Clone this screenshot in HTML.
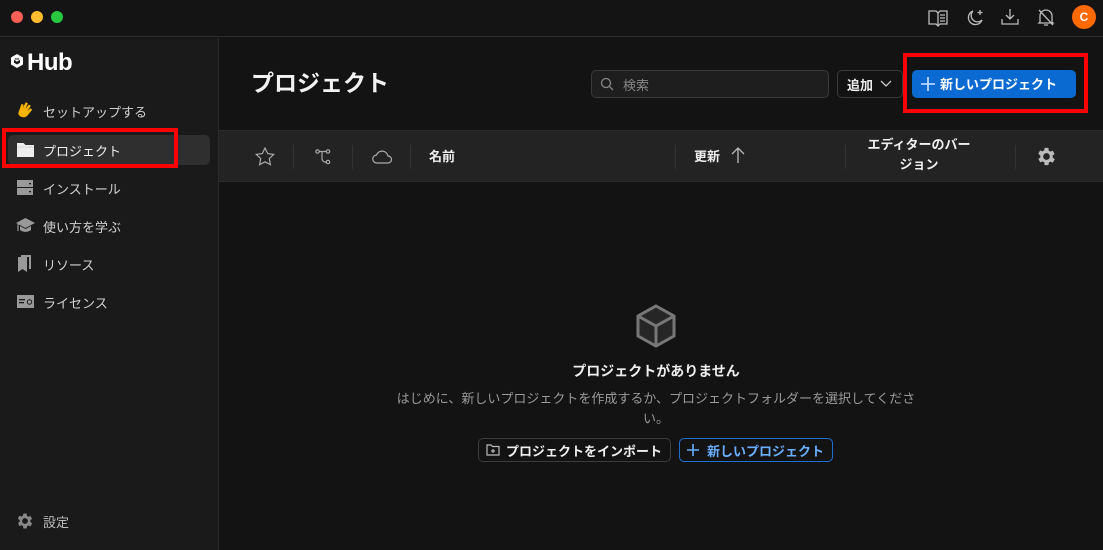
<!DOCTYPE html>
<html><head><meta charset="utf-8"><style>
*{margin:0;padding:0;box-sizing:border-box}
body{width:1103px;height:550px;overflow:hidden;background:#131313;font-family:"Liberation Sans","Noto Sans CJK JP",sans-serif;color:#ddd;position:relative}
.abs{position:absolute}
.title{left:0;top:0;width:1103px;height:37px;background:#141414;border-bottom:1px solid #2e2e2e}
.dot{top:11px;width:12px;height:12px;border-radius:50%}
.side{left:0;top:38px;width:219px;height:512px;background:#1a1a1a;border-right:1px solid #2a2a2a}
.nav{left:0;width:219px;height:30px;font-size:13px;color:#d0d0d0}
.nav svg{position:absolute;left:16px;top:5px}
.nav span{position:absolute;left:43px;top:6px}
.th{left:219px;top:130px;width:884px;height:52px;background:#232323;border-top:1px solid #2c2c2c;border-bottom:1px solid #2c2c2c}
.sep{top:14px;width:1px;height:24px;background:#333}
</style></head><body>
<div class="abs title"></div>
<div class="abs dot" style="left:11px;background:#fe5f57"></div>
<div class="abs dot" style="left:31px;background:#febc2e"></div>
<div class="abs dot" style="left:51px;background:#28c840"></div>
<svg class="abs" style="left:928px;top:9px" width="20" height="18" viewBox="0 0 20 18" fill="none" stroke="#bbb" stroke-width="1.3"><path d="M1 2h7l2 2 2-2h7v13h-7l-2 2-2-2H1z"/><path d="M10 4v13M12 6h5M12 9h5M12 12h5"/></svg>
<svg class="abs" style="left:965px;top:8px" width="20" height="20" viewBox="0 0 20 20" fill="none" stroke="#bbb" stroke-width="1.3"><path d="M8 3a7 7 0 1 0 9 9 6 6 0 0 1-9-9z"/><path d="M15 2v5M12.5 4.5h5"/></svg>
<svg class="abs" style="left:1001px;top:8px" width="18" height="18" viewBox="0 0 18 18" fill="none" stroke="#bbb" stroke-width="1.3"><path d="M9 1v10M5 7l4 4 4-4M1 11v5h16v-5"/></svg>
<svg class="abs" style="left:1037px;top:8px" width="18" height="19" viewBox="0 0 18 19" fill="none" stroke="#bbb" stroke-width="1.3"><path d="M3 14V8a6 6 0 0 1 12 0v6l1 1H2zM7 17h4M2 2l14 15"/></svg>
<div class="abs" style="left:1072px;top:5px;width:24px;height:24px;border-radius:50%;background:#ff6a00;color:#fff;font-size:12px;font-weight:bold;text-align:center;line-height:24px">C</div>

<div class="abs side"></div>
<svg class="abs" style="left:10px;top:54px" width="14" height="14" viewBox="0 0 14 14"><path d="M7 0l6 3.5v7L7 14 1 10.5v-7z" fill="#fff"/><path d="M7 3.5l3 1.7v3.6L7 10.5 4 8.8V5.2z" fill="#1a1a1a"/><path d="M7 3.5v3.5l3-1.8M7 7L4 5.2" stroke="#fff" stroke-width="1" fill="none"/></svg>
<div class="abs" style="left:27px;top:49px;font-size:24px;font-weight:bold;color:#fff;letter-spacing:-0.5px">Hub</div>

<div class="abs nav" style="top:96px"><svg width="20" height="20" viewBox="0 0 20 20"><path d="M3 10l2.5-7 2.2.8-1 3.5 3-6 2.2 1-2.5 6 3.4-4.8 2 1.2-3.3 5.3 3-2.8 1.7 1.5-4.5 5.5a5.5 5.5 0 0 1-9.5-1.7z" fill="#f5b400"/></svg><span>セットアップする</span></div>
<div class="abs" style="left:8px;top:135px;width:202px;height:30px;background:#2f2f2f;border-radius:5px"></div>
<div class="abs nav" style="top:135px"><svg width="19" height="18" viewBox="0 0 19 18" style="top:6px"><path d="M1 2h6.5l2 2H18v12H1z" fill="#eee"/><path d="M1 6h17" stroke="#ccc" stroke-width="0.8"/></svg><span style="color:#eee">プロジェクト</span></div>
<div class="abs" style="left:2px;top:128px;width:176px;height:40px;border:4px solid #f00"></div>
<div class="abs nav" style="top:173px"><svg width="18" height="18" viewBox="0 0 18 18" fill="#999" style="top:6px"><rect x="1" y="1" width="16" height="7"/><rect x="1" y="9" width="16" height="7"/><rect x="13" y="4" width="2" height="1.3" fill="#1a1a1a"/><rect x="13" y="12" width="2" height="1.3" fill="#1a1a1a"/></svg><span>インストール</span></div>
<div class="abs nav" style="top:211px"><svg width="21" height="20" viewBox="0 0 21 20" fill="#999" style="left:15px"><path d="M10.5 2L20 7l-9.5 5L1 7z"/><path d="M5 10v4c3 2.5 8 2.5 11 0v-4l-5.5 3z"/><path d="M3 8v7" stroke="#999" stroke-width="1.2"/></svg><span>使い方を学ぶ</span></div>
<div class="abs nav" style="top:249px"><svg width="17" height="19" viewBox="0 0 17 19" fill="#999"><path d="M2 3h9v15l-4.5-3L2 18z"/><path d="M5 1h10v14h-2V3H5z"/></svg><span>リソース</span></div>
<div class="abs nav" style="top:287px"><svg width="19" height="18" viewBox="0 0 19 18" fill="#999" style="top:6px"><rect x="1" y="2" width="17" height="13"/><rect x="3" y="6" width="6" height="1.3" fill="#1a1a1a"/><rect x="3" y="9" width="5" height="1.3" fill="#1a1a1a"/><circle cx="13.5" cy="9" r="2.7" fill="#1a1a1a"/><circle cx="13.5" cy="9" r="1.7"/></svg><span>ライセンス</span></div>
<div class="abs nav" style="top:506px"><svg width="20" height="20" viewBox="0 0 24 24" fill="#888" style="left:15px"><path d="M19.4 13a7.5 7.5 0 0 0 0-2l2.1-1.6-2-3.5-2.5 1a7.6 7.6 0 0 0-1.7-1L15 3h-4l-.4 2.6a7.6 7.6 0 0 0-1.7 1l-2.5-1-2 3.5L6.6 11a7.5 7.5 0 0 0 0 2l-2.1 1.6 2 3.5 2.5-1a7.6 7.6 0 0 0 1.7 1L11 21h4l.4-2.6a7.6 7.6 0 0 0 1.7-1l2.5 1 2-3.5zM13 15.5a3.5 3.5 0 1 1 0-7 3.5 3.5 0 0 1 0 7z" transform="translate(-1 0)"/></svg><span style="color:#bbb">設定</span></div>

<div class="abs" style="left:251px;top:64px;font-size:23px;font-weight:bold;color:#f2f2f2">プロジェクト</div>
<div class="abs" style="left:591px;top:70px;width:238px;height:28px;background:#1e1e1e;border:1px solid #3a3a3a;border-radius:5px"></div>
<svg class="abs" style="left:600px;top:77px" width="14" height="14" viewBox="0 0 14 14" fill="none" stroke="#888" stroke-width="1.3"><circle cx="6" cy="6" r="4.5"/><path d="M9.3 9.3L13 13"/></svg>
<div class="abs" style="left:623px;top:75px;font-size:13px;color:#888">検索</div>
<div class="abs" style="left:837px;top:70px;width:66px;height:28px;border:1px solid #3a3a3a;border-radius:5px;font-size:13px;font-weight:bold;color:#eee;padding:4px 0 0 9px">追加</div>
<svg class="abs" style="left:880px;top:80px" width="12" height="8" viewBox="0 0 12 8" fill="none" stroke="#ccc" stroke-width="1.3"><path d="M1 1l5 5 5-5"/></svg>
<div class="abs" style="left:912px;top:70px;width:164px;height:28px;background:#0a6ad2;border-radius:5px;font-size:13px;font-weight:bold;color:#fff;padding:4px 0 0 28px">新しいプロジェクト</div>
<svg class="abs" style="left:921px;top:77px" width="14" height="14" viewBox="0 0 14 14" stroke="#cfe2ff" stroke-width="1.6"><path d="M7 0v14M0 7h14"/></svg>
<div class="abs" style="left:903px;top:53px;width:185px;height:60px;border:4px solid #f00"></div>

<div class="abs th">
<svg class="abs" style="left:36px;top:16px" width="20" height="19" viewBox="0 0 20 19" fill="none" stroke="#aaa" stroke-width="1.2"><path d="M10 1l2.7 5.6 6 .8-4.4 4.2 1.1 6L10 14.8 4.6 17.6l1.1-6L1.3 7.4l6-.8z"/></svg>
<div class="abs sep" style="left:74px"></div>
<svg class="abs" style="left:96px;top:18px" width="17" height="16" viewBox="0 0 17 16" fill="none" stroke="#aaa" stroke-width="1.2"><circle cx="2.5" cy="2.5" r="1.7"/><circle cx="13" cy="2.5" r="1.7"/><circle cx="13" cy="13" r="1.7"/><path d="M4.3 2.5h6.9M7 2.5v7a3.5 3.5 0 0 0 4.3 3.5"/></svg>
<div class="abs sep" style="left:133px"></div>
<svg class="abs" style="left:153px;top:19px" width="20" height="14" viewBox="0 0 20 14" fill="none" stroke="#aaa" stroke-width="1.2"><path d="M5 13a4 4 0 0 1-.5-8A6 6 0 0 1 16 6a3.5 3.5 0 0 1 0 7z"/></svg>
<div class="abs sep" style="left:191px"></div>
<div class="abs" style="left:210px;top:15px;font-size:13px;font-weight:bold;color:#eee">名前</div>
<div class="abs sep" style="left:456px"></div>
<div class="abs" style="left:475px;top:15px;font-size:13px;font-weight:bold;color:#eee">更新</div>
<svg class="abs" style="left:512px;top:16px" width="14" height="17" viewBox="0 0 14 17" fill="none" stroke="#bbb" stroke-width="1.3"><path d="M7 16V1M1 7l6-6 6 6"/></svg>
<div class="abs sep" style="left:626px"></div>
<div class="abs" style="left:640px;top:4px;width:120px;text-align:center;font-size:13px;font-weight:bold;color:#eee;line-height:20px">エディターのバー<br>ジョン</div>
<div class="abs sep" style="left:796px"></div>
<svg class="abs" style="left:816px;top:14px" width="23" height="23" viewBox="0 0 24 24" fill="#bbb"><path d="M19.4 13a7.5 7.5 0 0 0 0-2l2.1-1.6-2-3.5-2.5 1a7.6 7.6 0 0 0-1.7-1L15 3h-4l-.4 2.6a7.6 7.6 0 0 0-1.7 1l-2.5-1-2 3.5L6.6 11a7.5 7.5 0 0 0 0 2l-2.1 1.6 2 3.5 2.5-1a7.6 7.6 0 0 0 1.7 1L11 21h4l.4-2.6a7.6 7.6 0 0 0 1.7-1l2.5 1 2-3.5zM13 15.5a3.5 3.5 0 1 1 0-7 3.5 3.5 0 0 1 0 7z" transform="translate(-1 0)"/></svg>
</div>

<svg class="abs" style="left:635px;top:304px" width="42" height="44" viewBox="0 0 42 44" fill="none" stroke="#777" stroke-width="3"><path d="M21 2l18 10v20L21 42 3 32V12z" fill="#262626"/><path d="M3 12l18 10 18-10M21 22v20"/></svg>
<div class="abs" style="left:400px;top:361px;width:512px;text-align:center;font-size:14px;font-weight:bold;color:#eee">プロジェクトがありません</div>
<div class="abs" style="left:396px;top:389px;width:520px;text-align:center;font-size:13px;color:#999;line-height:20px">はじめに、新しいプロジェクトを作成するか、プロジェクトフォルダーを選択してください。</div>
<div class="abs" style="left:478px;top:438px;width:193px;height:24px;border:1px solid #3c3c3c;border-radius:5px;font-size:13px;font-weight:bold;color:#eee;padding:2px 0 0 27px">プロジェクトをインポート</div>
<svg class="abs" style="left:486px;top:444px" width="14" height="12" viewBox="0 0 14 12" fill="none" stroke="#bbb" stroke-width="1.2"><path d="M1 1h4l1.5 1.5H13V11H1z"/><path d="M7 5v4M5 7h4"/></svg>
<div class="abs" style="left:679px;top:438px;width:154px;height:24px;border:1px solid #1f6fd0;border-radius:5px;font-size:13px;font-weight:bold;color:#6aaeff;padding:2px 0 0 27px">新しいプロジェクト</div>
<svg class="abs" style="left:687px;top:444px" width="12" height="12" viewBox="0 0 12 12" stroke="#6aaeff" stroke-width="1.6"><path d="M6 0v12M0 6h12"/></svg>
</body></html>
